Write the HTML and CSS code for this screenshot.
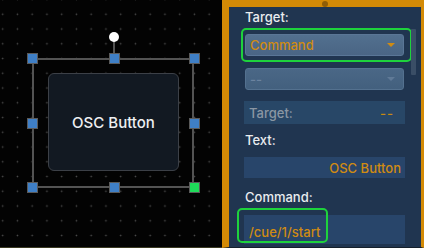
FILE: index.html
```html
<!DOCTYPE html>
<html lang="en">
<head>
  <meta charset="UTF-8">
  <title>OSC Button Editor</title>
  <link rel="stylesheet" href="styles.css">
</head>
<body>
  <div class="editor">
    <div class="canvas">
      <div class="selection">
        <div class="rotate-line"></div>
        <div class="rotate-knob"></div>
        <span class="handle h-tl"></span>
        <span class="handle h-tm"></span>
        <span class="handle h-tr"></span>
        <span class="handle h-ml"></span>
        <span class="handle h-mr"></span>
        <span class="handle h-bl"></span>
        <span class="handle h-bm"></span>
        <span class="handle h-br"></span>
      </div>
      <div class="osc-button">OSC Button</div>
    </div>

    <div class="panel">
      <span class="panel-grip"></span>
      <div class="panel-body">
        <div class="label">Target:</div>
        <div class="select sel-main">
          <span>Command</span>
          <span class="arrow"></span>
        </div>
        <div class="select sel-off">
          <span>--</span>
          <span class="arrow"></span>
        </div>
        <div class="field field-target">
          <span class="muted">Target:</span>
          <span class="dash">--</span>
        </div>
        <div class="label label-gap">Text:</div>
        <div class="field field-text">OSC Button</div>
        <div class="label label-gap2">Command:</div>
        <div class="field field-cmd">/cue/1/start</div>

        <div class="highlight hl-select"></div>
        <div class="highlight hl-cmd"></div>
      </div>
      <div class="scrollbar"></div>
    </div>
  </div>
</body>
</html>
```

FILE: styles.css
```css
* { margin: 0; padding: 0; box-sizing: border-box; }
html, body { width: 424px; height: 248px; overflow: hidden; background: #000; }
body { font-family: Inter, "Liberation Sans", Arial, sans-serif; }

.editor {
  display: flex;
  width: 424px;
  height: 248px;
}

/* canvas side */
.canvas {
  position: relative;
  width: 222px;
  height: 248px;
  background-color: #030303;
  background-image: radial-gradient(circle, #4c4c4c 0.7px, transparent 1.1px);
  background-size: 14.75px 14.75px;
  background-position: -4.7px 6.9px;
  border-bottom: 1px solid #3b3a22;
}
.osc-button {
  position: absolute;
  left: 48px;
  top: 73px;
  width: 131px;
  height: 98px;
  background: #121922;
  border: 1.5px solid #3c4047;
  border-radius: 6px;
  color: #eef0f2;
  font-size: 15px;
  font-weight: 500;
  display: flex;
  justify-content: center;
  align-items: center;
}
.selection {
  position: absolute;
  left: 32px;
  top: 58px;
  width: 162px;
  height: 130px;
  border: 2px solid #535353;
}
.rotate-line {
  position: absolute;
  left: 79px;
  top: -20px;
  width: 2px;
  height: 18px;
  background: #535353;
}
.rotate-knob {
  position: absolute;
  left: 75px;
  top: -28px;
  width: 10px;
  height: 10px;
  border-radius: 50%;
  background: #fff;
}
.handle {
  position: absolute;
  width: 11px;
  height: 11px;
  background: #3f7fc6;
  border: 1.5px solid #5a5a5a;
}
.h-tl { left: -7px; top: -7px; }
.h-tm { left: 75px; top: -7px; }
.h-tr { left: 155px; top: -7px; }
.h-ml { left: -7px; top: 58px; }
.h-mr { left: 155px; top: 58px; }
.h-bl { left: -7px; top: 122px; }
.h-bm { left: 75px; top: 122px; }
.h-br { left: 155px; top: 122px; background: #1fdc5a; }

/* inspector panel */
.panel {
  position: relative;
  width: 202px;
  height: 248px;
  background: #203550;
  border-top: 7px solid #d38a06;
  border-left: 7px solid #d38a06;
  border-right: 3px solid #d38a06;
  border-bottom: 1px solid #15202c;
}
.panel-grip {
  position: absolute;
  left: 93px;
  top: -6px;
  width: 6px;
  height: 6px;
  border-radius: 50%;
  background: #8f5d06;
}
.panel-body {
  position: relative;
  display: flex;
  flex-direction: column;
  padding: 2px 0 0 16px;
  width: 177px;
  font-weight: 500;
}
.label {
  color: #e9ecef;
  font-size: 13px;
  line-height: 16px;
}
.label-gap { margin-top: 8px; }
.label-gap2 { margin-top: 11px; }

.select {
  display: flex;
  align-items: center;
  justify-content: space-between;
  width: 159px;
  height: 22px;
  padding: 0 8px 0 4px;
  border-radius: 3px;
  font-size: 13px;
}
.sel-main {
  margin-top: 9px;
  background: linear-gradient(#52708f, #4a6584);
  border: 1px solid #5a7696;
  color: #d08b12;
}
.sel-off {
  margin-top: 12px;
  background: linear-gradient(#4a6786, #43607e);
  border: 1px solid #54718f;
  color: #6c83a0;
}
.arrow {
  width: 0;
  height: 0;
  border-left: 4px solid transparent;
  border-right: 4px solid transparent;
  border-top: 4px solid #d08b12;
}
.sel-off .arrow { border-top-color: #607a97; }

.field {
  width: 161px;
  background: #28456a;
  font-size: 13px;
  color: #d08b12;
  display: flex;
  align-items: center;
  padding: 0 5px;
  margin-left: -1px;
}
.field-target {
  margin-top: 11px;
  height: 23px;
  justify-content: space-between;
  background: #284767;
}
.muted { color: #8a96a3; }
.dash { color: #c88a10; padding-right: 6px; letter-spacing: 1px; }
.field-text {
  margin-top: 9px;
  height: 21px;
  justify-content: flex-end;
  padding-right: 4px;
}
.field-cmd {
  margin-top: 10px;
  height: 29px;
  padding-top: 4px;
}

.highlight {
  position: absolute;
  border: 2px solid #1ed23c;
  border-radius: 5px;
}
.hl-select { left: 12px; top: 21px; width: 171px; height: 34px; }
.hl-cmd { left: 8px; top: 201px; width: 91px; height: 35px; }

.scrollbar {
  position: absolute;
  left: 182px;
  top: 22px;
  width: 5px;
  height: 46px;
  background: #3a4e66;
  border-radius: 1px;
}
```
